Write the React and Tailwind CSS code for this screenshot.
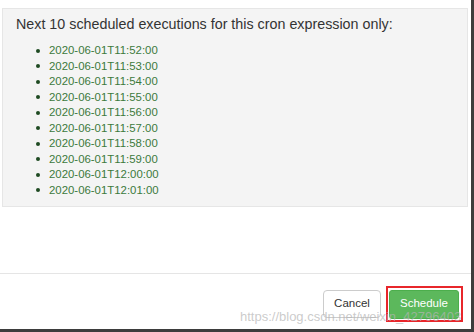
export default function App() {
  const times = [
    "2020-06-01T11:52:00",
    "2020-06-01T11:53:00",
    "2020-06-01T11:54:00",
    "2020-06-01T11:55:00",
    "2020-06-01T11:56:00",
    "2020-06-01T11:57:00",
    "2020-06-01T11:58:00",
    "2020-06-01T11:59:00",
    "2020-06-01T12:00:00",
    "2020-06-01T12:01:00",
  ];
  return (
    <div className="relative w-[474px] h-[332px] bg-white border-r-[3px] border-b-[3px] border-[#3d3d3d] overflow-hidden flex flex-col font-['Liberation_Sans',Arial,sans-serif]">
      <div className="pt-[8px] pl-[2px] pr-[3px]">
        <div className="h-[199px] bg-[#f4f4f4] border border-[#e6e6e6] pl-[13px] pt-[5px]">
          <p className="text-[14.3px] leading-[20px] text-[#333]">
            Next 10 scheduled executions for this cron expression only:
          </p>
          <ul className="mt-[9px] pl-[20px]">
            {times.map((t) => (
              <li key={t} className="flex items-center h-[15.5px] leading-[15.5px] text-[11.4px] text-[#3c7a3c]">
                <span className="w-[4px] h-[4px] rounded-full bg-[#1e4a22] mr-[9px]" />
                {t}
              </li>
            ))}
          </ul>
        </div>
      </div>
      <div className="h-[66px]" />
      <div className="border-t border-[#e5e5e5] flex justify-end items-center pt-[12px] pr-[8px]">
        <button className="w-[58px] h-[28px] border border-[#cccccc] rounded-[4px] bg-white text-[11.5px] text-[#333] mr-[5px]">
          Cancel
        </button>
        <div className="w-[77px] h-[36px] border-2 border-[#e8262b] flex items-center pl-[1px]">
          <button className="w-[70px] h-[29px] rounded-[3px] bg-[#5cb85c] border border-[#4cae4c] text-[11.5px] text-white">
            Schedule
          </button>
        </div>
      </div>
      <div className="absolute left-[240px] top-[309px] text-[13px] leading-[16px] text-[#b4b4b4]/70 whitespace-nowrap">
        https://blog.csdn.net/weixin_42796403
      </div>
    </div>
  );
}
